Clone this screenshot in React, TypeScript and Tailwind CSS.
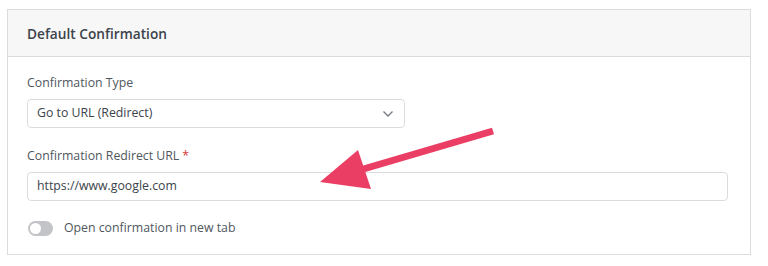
import React from "react";

export default function App() {
  return (
    <div className="relative w-[768px] h-[266px] bg-white pt-[9px] px-[7px]" style={{ fontFamily: '"Open Sans", "Noto Sans", sans-serif' }}>
      <div className="w-[744px] h-[246px] border border-[#dcdcde] bg-white">
        <div className="h-[47px] bg-[#f7f7f7] border-b border-[#dcdcde] flex items-center px-[19px] pt-[2px]">
          <span className="text-[13.7px] font-semibold text-[#3c434a]">Default Confirmation</span>
        </div>
        <div className="pl-[19px] pr-[22px] pt-[16px]">
          <div className="h-[20px] flex items-center text-[12.3px] text-[#50575e]">Confirmation Type</div>
          <div className="mt-[6px] w-[378px] h-[29px] border border-[#dcdcde] rounded-[4px] flex items-center justify-between pl-[9px] pr-[9px]">
            <span className="text-[12.3px] text-[#3c434a]">Go to URL (Redirect)</span>
            <svg width="12" height="8" viewBox="0 0 12 8" className="mr-[1px]">
              <path d="M1.5 1.5 L6 6 L10.5 1.5" fill="none" stroke="#787c82" strokeWidth="1.4" />
            </svg>
          </div>
          <div className="mt-[18px] h-[20px] flex items-center text-[12.3px] text-[#50575e]">
            Confirmation Redirect URL<span className="ml-[3px] text-[#d63638]">*</span>
          </div>
          <div className="mt-[6px] h-[29px] border border-[#dcdcde] rounded-[4px] flex items-center pl-[9px]">
            <span className="text-[12.3px] text-[#3c434a]">https://www.google.com</span>
          </div>
          <div className="mt-[19px] flex items-center gap-[11px] h-[17px]">
            <div className="w-[25px] h-[15px] rounded-full bg-[#c3c4c7] ml-[1px] relative">
              <div className="absolute left-[2px] top-[2px] w-[11px] h-[11px] rounded-full bg-white" />
            </div>
            <span className="text-[12.3px] text-[#50575e]">Open confirmation in new tab</span>
          </div>
        </div>
      </div>
      <svg className="absolute left-0 top-0 pointer-events-none" width="768" height="266" viewBox="0 0 768 266">
        <line x1="493" y1="131" x2="360" y2="170" stroke="#eb3e64" strokeWidth="7" />
        <polygon points="320,182 358,150 371,189" fill="#eb3e64" />
      </svg>
    </div>
  );
}
